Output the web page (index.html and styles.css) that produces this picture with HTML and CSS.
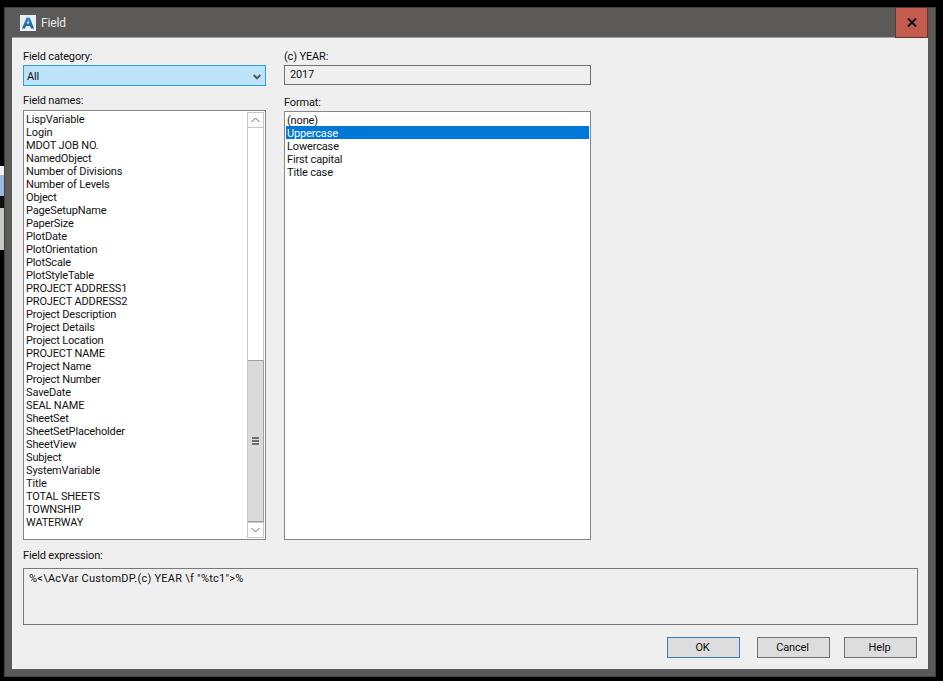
FILE: index.html
```html
<!DOCTYPE html>
<html lang="en">
<head>
<meta charset="utf-8">
<title>Field</title>
<link rel="stylesheet" href="styles.css">
</head>
<body>
<div class="desktop">
  <div class="peek"></div>
  <div class="window">
    <div class="titlebar">
      <svg class="app-icon" width="16" height="16" viewBox="0 0 16 16">
        <defs><linearGradient id="a" x1="0" y1="0" x2="0" y2="1"><stop offset="0" stop-color="#3f8cc0"/><stop offset="1" stop-color="#17608f"/></linearGradient></defs>
        <rect width="16" height="16" fill="#e6eef4"/>
        <path d="M2 13.5 L6.5 2.5 H9.8 L14 13.5 H11 L10.1 11 H6 L5 13.5 Z M6.9 8.6 H9.2 L8.1 5.4 Z" fill="url(#a)" fill-rule="evenodd"/>
      </svg>
      <span class="title">Field</span>
      <div class="close"><svg width="10" height="9" viewBox="0 0 10 9"><path d="M1 0.5 L9 8.5 M9 0.5 L1 8.5" stroke="#111" stroke-width="2" fill="none"/></svg></div>
    </div>
    <div class="client">
      <div class="columns">
        <div class="left">
          <div class="label">Field category:</div>
          <div class="combo"><span>All</span>
            <svg width="8" height="6" viewBox="0 0 8 6"><path d="M0.7 1 L4 4.4 L7.3 1" stroke="#555" stroke-width="2" fill="none"/></svg>
          </div>
          <div class="label names-label">Field names:</div>
          <div class="listbox names">
            <div class="items">
              <div>LispVariable</div><div>Login</div><div>MDOT JOB NO.</div><div>NamedObject</div><div>Number of Divisions</div><div>Number of Levels</div><div>Object</div><div>PageSetupName</div><div>PaperSize</div><div>PlotDate</div><div>PlotOrientation</div><div>PlotScale</div><div>PlotStyleTable</div><div>PROJECT ADDRESS1</div><div>PROJECT ADDRESS2</div><div>Project Description</div><div>Project Details</div><div>Project Location</div><div>PROJECT NAME</div><div>Project Name</div><div>Project Number</div><div>SaveDate</div><div>SEAL NAME</div><div>SheetSet</div><div>SheetSetPlaceholder</div><div>SheetView</div><div>Subject</div><div>SystemVariable</div><div>Title</div><div>TOTAL SHEETS</div><div>TOWNSHIP</div><div>WATERWAY</div>
            </div>
            <div class="scrollbar">
              <div class="sb-btn"><svg width="9" height="6" viewBox="0 0 9 6"><path d="M0.5 5 L4.5 1 L8.5 5" stroke="#666" stroke-width="1" fill="none"/></svg></div>
              <div class="sb-track"></div>
              <div class="sb-thumb"><span class="grip"></span></div>
              <div class="sb-btn"><svg width="9" height="6" viewBox="0 0 9 6"><path d="M0.5 1 L4.5 5 L8.5 1" stroke="#666" stroke-width="1" fill="none"/></svg></div>
            </div>
          </div>
        </div>
        <div class="right">
          <div class="label">(c) YEAR:</div>
          <div class="readonly">2017</div>
          <div class="label format-label">Format:</div>
          <div class="listbox format">
            <div class="items">
              <div>(none)</div><div class="selected">Uppercase</div><div>Lowercase</div><div>First capital</div><div>Title case</div>
            </div>
          </div>
        </div>
      </div>
      <div class="label expr-label">Field expression:</div>
      <div class="expression">%&lt;\AcVar CustomDP.(c) YEAR \f "%tc1"&gt;%</div>
      <div class="buttons">
        <div class="btn default">OK</div>
        <div class="btn">Cancel</div>
        <div class="btn">Help</div>
      </div>
    </div>
  </div>
</div>
</body>
</html>
```

FILE: styles.css
```css
* { box-sizing: border-box; }
html, body { margin: 0; padding: 0; }
body {
  width: 943px;
  height: 681px;
  overflow: hidden;
  background: #000;
  font-family: "Roboto", "Noto Sans", sans-serif;
  font-size: 11px;
  letter-spacing: -0.15px;
  color: #111;
}
.desktop {
  position: relative;
  width: 943px;
  height: 681px;
  padding: 7px 7px 4px 4px;
}
.peek {
  position: absolute;
  left: 0;
  top: 166px;
  width: 4px;
  height: 84px;
  background: linear-gradient(#f2f2f2 0 9px, #9db7d8 9px 30px, #111 30px 42px, #c8c8c8 42px);
}
.window {
  position: relative;
  height: 670px;
  background: #5c5a58;
  border: 1px solid #404040;
  padding: 0 7px 7px 7px;
  display: flex;
  flex-direction: column;
}
.titlebar {
  height: 30px;
  display: flex;
  align-items: center;
  padding-left: 8px;
  flex: none;
  border-bottom: 1px solid #9aa0a8;
}
.app-icon { flex: none; }
.title {
  margin-left: 5px;
  color: #e8e8e8;
  font-size: 12px;
}
.close {
  margin-left: auto;
  width: 33px;
  height: 31px;
  margin-top: -1px;
  background: #c45c50;
  border: 1px solid #5e3632;
  display: flex;
  align-items: center;
  justify-content: center;
  flex: none;
}
.client {
  flex: 1;
  background: #efefef;
  padding: 11px 11px 0 11px;
  display: flex;
  flex-direction: column;
}
.columns { display: flex; gap: 18px; height: 491px; flex: none; }
.left { width: 243px; display: flex; flex-direction: column; }
.right { width: 307px; display: flex; flex-direction: column; }
.label { height: 16px; padding-top: 1px; line-height: 14px; color: #111; }
.combo {
  height: 21px;
  background: #bde3fb;
  border: 1px solid #2ba0e0;
  display: flex;
  align-items: center;
  justify-content: space-between;
  padding: 2px 4px 0 3px;
}
.names-label { margin-top: 7px; height: 17px; }
.listbox {
  background: #fff;
  border: 1px solid #84868c;
  flex: 1;
  display: flex;
  min-height: 0;
}
.items { flex: 1; line-height: 13px; padding: 2px 0 0 2px; min-width: 0; }
.format .items { padding: 1px 1px 0 1px; }
.items div { height: 13px; white-space: nowrap; }
.format .items div { padding: 1px 0 0 1px; line-height: 14px; }
.selected { background: #0078d7; color: #fff; }
.scrollbar {
  width: 17px;
  margin: 1px 1px 1px 0;
  display: flex;
  flex-direction: column;
  border-left: 1px solid #c8c8c8;
}
.sb-btn {
  height: 16px;
  background: #fff;
  border: 1px solid #c8c8c8;
  border-left: 0;
  display: flex;
  align-items: center;
  justify-content: center;
  flex: none;
}
.sb-track { height: 232px; background: #fff; border-right: 1px solid #c8c8c8; flex: none; }
.sb-thumb {
  flex: 1;
  background: #dadada;
  border: 1px solid #a0a0a0;
  border-left: 0;
  display: flex;
  align-items: center;
  justify-content: center;
}
.grip {
  width: 7px;
  height: 8px;
  background: repeating-linear-gradient(#707070 0 2px, #dadada 2px 3px);
}
.readonly {
  height: 20px;
  width: 307px;
  background: #efefef;
  border: 1px solid #707070;
  padding: 0 5px;
  line-height: 18px;
}
.format-label { margin-top: 10px; height: 16px; }
.expr-label { margin-top: 8px; height: 20px; }
.expression {
  height: 57px;
  width: 895px;
  border: 1px solid #7a7a7a;
  padding: 2px 5px;
  line-height: 15px;
  letter-spacing: 0.25px;
}
.buttons { display: flex; justify-content: flex-end; margin-top: 12px; width: 894px; }
.btn {
  width: 73px;
  height: 21px;
  margin-left: 14px;
  padding-right: 2px;
  background: #dddddd;
  border: 1px solid #707070;
  text-align: center;
  line-height: 19px;
}
.btn.default { border-color: #3b7cb5; margin-right: 3px; }
```
